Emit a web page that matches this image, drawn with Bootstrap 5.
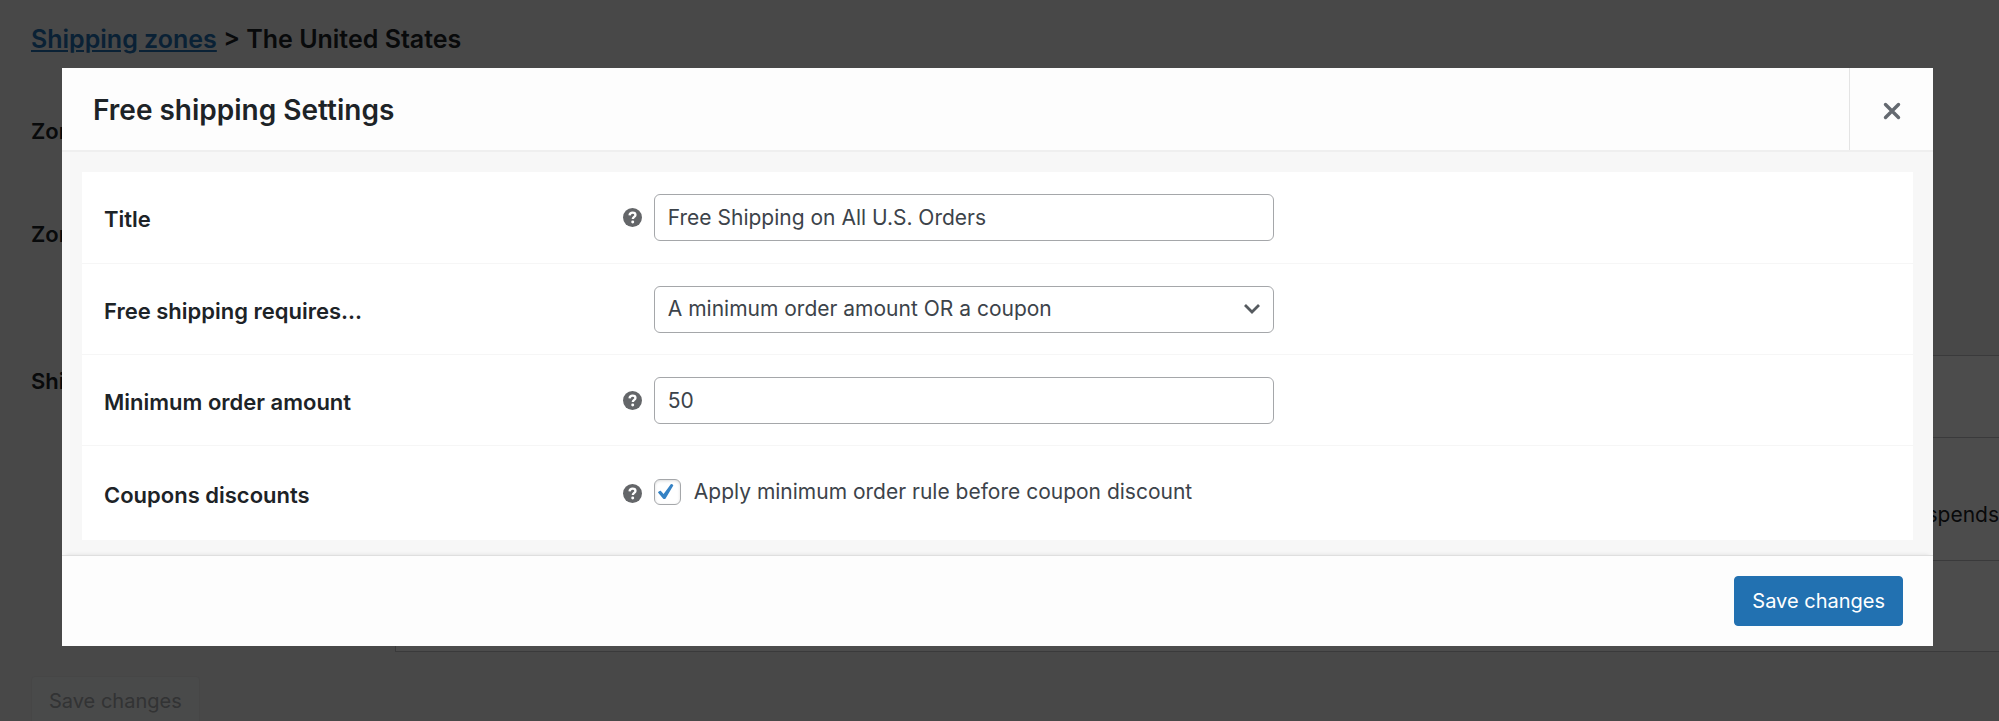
<!DOCTYPE html>
<html lang="en">
<head>
<meta charset="utf-8">
<meta name="viewport" content="width=device-width, initial-scale=1">
<title>Shipping zones</title>
<link href="https://cdn.jsdelivr.net/npm/bootstrap@5.3.0/dist/css/bootstrap.min.css" rel="stylesheet">
<style>
  body { background: #f0f0f1; color: #1d2327; font-family: Inter, "Liberation Sans", sans-serif; font-size: 21px; line-height: 28px; }
  .page-wrap { padding: 23px 0 0 31px; }
  .page-title { font-size: 25px; line-height: 32px; font-weight: 600; margin-bottom: 62px; }
  .page-title a { color: #2271b1; }
  .zone-row { display: grid; grid-template-columns: 364px minmax(0, 1fr); }
  .zone-label { font-size: 22px; font-weight: 600; }
  .zone-tall { min-height: 103px; }
  .zone-regions { min-height: 135px; }
  .methods { background: #fff; border: 1px solid #c3c4c7; border-right: 0; }
  .methods-head { height: 81px; }
  .methods-item { height: 123px; border-top: 1px solid #c3c4c7; padding-top: 32px; }
  .methods-add { height: 91px; border-top: 1px solid #c3c4c7; }
  .btn-admin { height: 50px; padding: 0 17px; border-radius: 4px; font-size: 20px; line-height: 28px; font-weight: 400; }
  .btn-admin:disabled { background: #f6f7f7; border-color: #e9eaea; color: #a7aaad; opacity: 1; }
  .btn-save { background: #2271b1; border-color: #2271b1; color: #fff; }
  .modal-backdrop { --bs-backdrop-opacity: .7; }
  .settings-dialog { max-width: none; margin: 68px 66px 0 62px; }
  .settings-dialog .modal-content { background: #f7f7f7; border: 0; border-radius: 0; color: #1d2327; }
  .settings-dialog .modal-header { height: 84px; background: #fdfdfd; border-bottom: 2px solid #efefef; border-radius: 0; padding: 0 0 0 31px; align-items: stretch; }
  .settings-dialog .modal-title { font-size: 28px; line-height: 36px; font-weight: 600; padding-top: 2px; }
  .close-button { width: 84px; border: 0; border-left: 1px solid #e4e4e4; background: transparent; color: #646970; padding-top: 4px; }
  .settings-dialog .modal-body { padding: 20px 20px 15px 20px; }
  .setting { display: grid; grid-template-columns: 21fr 31px 50fr; align-items: center; min-height: 91px; padding: 0 24px 0 22px; background: #fff; }
  .setting + .setting { border-top: 1px solid #f6f6f6; }
  .setting:last-child { min-height: 95px; }
  .setting-name { font-size: 22px; font-weight: 600; padding-top: 3px; }
  .setting .form-control, .setting .form-select { max-width: 620px; height: 47px; padding: 0 13px; border: 1px solid #a5a7aa; border-radius: 6px; color: #3c434a; font-size: 21px; line-height: 28px; }
  .setting .form-select { background-image: url("data:image/svg+xml,%3Csvg xmlns='http://www.w3.org/2000/svg' viewBox='0 0 18 12'%3E%3Cpath d='M2 2l7 7 7-7' fill='none' stroke='%23555a5f' stroke-width='2.8'/%3E%3C/svg%3E"); background-size: 18px 12px; background-position: right 12px center; }
  .setting .form-check-input { width: 27px; height: 26px; margin: 0; border: 1px solid #a5a7aa; border-radius: 6px; background-color: #fff; box-shadow: inset 0 1px 3px rgba(0,0,0,.14); }
  .setting .form-check-input:checked { border-color: #a5a7aa; background-color: #fff; background-size: 25px 24px; background-image: url("data:image/svg+xml,%3Csvg xmlns='http://www.w3.org/2000/svg' viewBox='0 0 25 24'%3E%3Cpath d='M3 12.6c0-.9 1.900-2.300 2.700-1.900L8.600 14 15.600 4.400c.8-.8 2.800.2 2.700 1.200L10.600 18.400c-.6.9-2 .9-2.600 0z' fill='%233582c4'/%3E%3C/svg%3E"); }
  .check-line { gap: 13px; padding-bottom: 3px; }
  .check-text { color: #3c434a; }
  .settings-dialog .modal-footer { height: 91px; background: #fdfdfd; border-top: 1px solid #dfdfdf; border-radius: 0; padding: 0 30px 0 0; box-shadow: 0 -4px 4px -4px rgba(0,0,0,.1); }
  .modal-footer .btn-admin { margin: 0; }
</style>
</head>
<body class="modal-open overflow-hidden">
<svg class="d-none" aria-hidden="true">
  <symbol id="help" viewBox="0 0 18 18">
    <circle cx="9" cy="9" r="9" fill="#646669"/>
    <path d="M6.200 6.900c.2-1.700 1.300-2.500 2.900-2.500 1.600 0 2.700.8 2.700 2.200 0 1.800-2.500 1.900-2.500 3.800" fill="none" stroke="#fff" stroke-width="2.200"/>
    <circle cx="9.200" cy="13.200" r="1.400" fill="#fff"/>
  </symbol>
</svg>

<main class="page-wrap">
  <h1 class="page-title"><a href="#">Shipping zones</a> &gt; The United States</h1>
  <div class="zone-row zone-tall"><div class="zone-label">Zone name</div></div>
  <div class="zone-row zone-regions"><div class="zone-label">Zone regions</div></div>
  <div class="zone-row">
    <div class="zone-label pt-2 mt-1">Shipping methods</div>
    <div class="methods">
      <div class="methods-head"></div>
      <div class="methods-item d-flex align-items-center justify-content-end">spends</div>
      <div class="methods-add"></div>
    </div>
  </div>
  <button type="button" class="btn btn-admin mt-4" disabled>Save changes</button>
</main>

<div class="modal-backdrop show"></div>
<div class="modal show d-block" tabindex="-1" role="dialog" aria-labelledby="dialogTitle">
  <div class="modal-dialog settings-dialog">
    <form class="modal-content">
      <div class="modal-header">
        <h2 class="modal-title align-self-center" id="dialogTitle">Free shipping Settings</h2>
        <button type="button" class="close-button d-flex align-items-center justify-content-center" aria-label="Close">
          <svg width="18" height="18" viewBox="0 0 18 18"><path d="M2.500 2.500l13 13M15.500 2.500l-13 13" fill="none" stroke="currentColor" stroke-width="3.400" stroke-linecap="round"/></svg>
        </button>
      </div>
      <div class="modal-body">
        <div class="setting">
          <label class="setting-name" for="title">Title</label>
          <svg width="19" height="19"><use href="#help"/></svg>
          <input class="form-control" id="title" type="text" value="Free Shipping on All U.S. Orders">
        </div>
        <div class="setting">
          <label class="setting-name" for="requires">Free shipping requires...</label>
          <span></span>
          <select class="form-select" id="requires"><option>A minimum order amount OR a coupon</option></select>
        </div>
        <div class="setting">
          <label class="setting-name" for="amount">Minimum order amount</label>
          <svg width="19" height="19"><use href="#help"/></svg>
          <input class="form-control" id="amount" type="text" value="50">
        </div>
        <div class="setting">
          <span class="setting-name">Coupons discounts</span>
          <svg width="19" height="19"><use href="#help"/></svg>
          <div class="check-line d-flex align-items-center">
            <input class="form-check-input" id="discounts" type="checkbox" checked>
            <label class="check-text" for="discounts">Apply minimum order rule before coupon discount</label>
          </div>
        </div>
      </div>
      <div class="modal-footer">
        <button type="button" class="btn btn-admin btn-save">Save changes</button>
      </div>
    </form>
  </div>
</div>
<script src="https://cdn.jsdelivr.net/npm/bootstrap@5.3.0/dist/js/bootstrap.bundle.min.js"></script>
</body>
</html>
